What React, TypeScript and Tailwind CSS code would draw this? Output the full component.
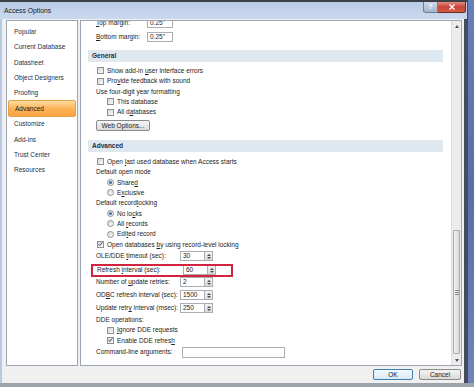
import type { ReactNode } from "react";

const navItems = [
  "Popular",
  "Current Database",
  "Datasheet",
  "Object Designers",
  "Proofing",
  "Advanced",
  "Customize",
  "Add-ins",
  "Trust Center",
  "Resources",
];

function U({ children }: { children: ReactNode }) {
  return <span className="underline">{children}</span>;
}

function CheckBox({ checked = false }: { checked?: boolean }) {
  return (
    <span className="w-[7px] h-[7px] shrink-0 border border-[#8e8f8f] bg-gradient-to-br from-[#d6d6d6] to-[#fbfbfb] flex items-center justify-center">
      {checked && (
        <svg width="6" height="6" viewBox="0 0 6 6">
          <path d="M0.8 3.2 L2.3 4.8 L5.2 0.9" fill="none" stroke="#33476e" strokeWidth="1.1" />
        </svg>
      )}
    </span>
  );
}

function Radio({ on = false }: { on?: boolean }) {
  return (
    <span className="w-[7px] h-[7px] shrink-0 rounded-full border border-[#8e8f8f] bg-gradient-to-br from-[#d8d8d8] to-[#fafafa] flex items-center justify-center">
      {on && <span className="w-[3px] h-[3px] rounded-full bg-[#3f6aa6]" />}
    </span>
  );
}

function CheckRow({ label, checked, nested }: { label: ReactNode; checked?: boolean; nested?: boolean }) {
  return (
    <div className={`h-[10.34px] flex items-center gap-[3px] ${nested ? "pl-[26px]" : "pl-[16px]"}`}>
      <CheckBox checked={checked} />
      <span className="whitespace-nowrap">{label}</span>
    </div>
  );
}

function RadioRow({ label, on }: { label: ReactNode; on?: boolean }) {
  return (
    <div className="h-[10.34px] flex items-center gap-[3px] pl-[26px]">
      <Radio on={on} />
      <span className="whitespace-nowrap">{label}</span>
    </div>
  );
}

function TextRow({ label }: { label: ReactNode }) {
  return <div className="h-[10.34px] flex items-center pl-[15px] whitespace-nowrap">{label}</div>;
}

function Spin() {
  return (
    <div className="w-[8px] h-[10px] border border-l-0 border-[#abadb3] bg-gradient-to-b from-[#f2f2f2] to-[#dcdcdc] flex flex-col items-center justify-center gap-[1px]">
      <svg width="4" height="2" viewBox="0 0 4 2">
        <path d="M0 2 L2 0 L4 2 Z" fill="#4d4d4d" />
      </svg>
      <svg width="4" height="2" viewBox="0 0 4 2">
        <path d="M0 0 L4 0 L2 2 Z" fill="#4d4d4d" />
      </svg>
    </div>
  );
}

function SpinRow({ label, value, shifted }: { label: ReactNode; value: string; shifted?: boolean }) {
  return (
    <div className={`relative h-[13px] flex items-center ${shifted ? "pl-[16px] pt-[2px]" : "pl-[15px]"}`}>
      <span className={`${shifted ? "w-[86px]" : "w-[84px]"} whitespace-nowrap`}>{label}</span>
      <div className="w-[25px] h-[10px] border border-[#abadb3] bg-white flex items-center pl-[2px]">{value}</div>
      <Spin />
      {shifted && (
        <div className="absolute left-[10px] top-[1.5px] w-[142px] h-[13px] border-2 border-[#d22440]" />
      )}
    </div>
  );
}

function SectionHeader({ title, className }: { title: string; className: string }) {
  return (
    <div className={`ml-[7px] mr-[8px] h-[12px] bg-[#dfe7ef] flex items-center pl-[4px] font-bold text-[#1e2e48] ${className}`}>
      {title}
    </div>
  );
}

function Scrollbar() {
  return (
    <div className="w-[10px] flex flex-col bg-[#ececec] border-l border-[#dedede]">
      <div className="h-[10px] flex items-center justify-center">
        <svg width="4" height="3" viewBox="0 0 4 3">
          <path d="M0 3 L2 0 L4 3 Z" fill="#555" />
        </svg>
      </div>
      <div className="h-[199px]" />
      <div className="h-[124px] mx-[1px] rounded-[1px] border border-[#a9a9a9] bg-gradient-to-r from-[#f3f3f3] to-[#d9d9d9] flex flex-col items-center justify-center gap-[1px]">
        <span className="w-[4px] h-[1px] bg-[#8a8a8a]" />
        <span className="w-[4px] h-[1px] bg-[#8a8a8a]" />
        <span className="w-[4px] h-[1px] bg-[#8a8a8a]" />
      </div>
      <div className="h-[1px]" />
      <div className="h-[10px] flex items-center justify-center">
        <svg width="4" height="3" viewBox="0 0 4 3">
          <path d="M0 0 L4 0 L2 3 Z" fill="#555" />
        </svg>
      </div>
    </div>
  );
}

export default function App() {
  return (
    <div className="w-[474px] h-[387px] flex flex-col overflow-hidden bg-[#5f74ad] font-['Liberation_Sans',Arial,sans-serif] text-[6.5px] text-[#222]">
      <div className="flex h-[383px]">
        <div className="w-[467px] flex flex-col">
          <div className="h-[2px] bg-[#3d4046]" />
          {/* title bar */}
          <div className="h-[17px] flex items-start bg-gradient-to-b from-[#b9cce7] to-[#cbd9ee]">
            <span className="pl-[4px] pt-[4px] text-[6.8px] text-[#1a1a1a]">Access Options</span>
            <div className="ml-auto mr-[1px] flex">
              <div className="w-[15px] h-[11px] rounded-bl-[3px] border border-t-0 border-[#6f7d92] bg-gradient-to-b from-[#cfdaea] to-[#a5b5cc] flex items-center justify-center text-[7px] text-white font-bold">
                ?
              </div>
              <div className="w-[28px] h-[11px] rounded-br-[3px] border border-t-0 border-l-0 border-[#6b2a24] bg-gradient-to-b from-[#e48a7c] via-[#c9423a] to-[#d2603f] flex items-center justify-center">
                <svg width="6" height="6" viewBox="0 0 6 6">
                  <path d="M0.5 0.5 L5.5 5.5 M5.5 0.5 L0.5 5.5" stroke="#fff" strokeWidth="1.4" />
                </svg>
              </div>
            </div>
          </div>
          <div className="flex flex-1 min-h-0">
            <div className="w-[2px] bg-[#b6c9e5]" />
            {/* client area */}
            <div className="w-[462px] flex flex-col bg-[#f0f0f0] pt-[1px] pl-[4px] pr-[2px]">
              <div className="h-[346px] flex gap-[2px]">
                {/* nav */}
                <div className="w-[72px] border border-[#9ba5b3] bg-white pt-[3px] flex flex-col text-[#1c2f4a]">
                  {navItems.map((item) =>
                    item === "Advanced" ? (
                      <div
                        key={item}
                        className="h-[17.4px] -my-[1px] mx-[1px] flex items-center pl-[6px] rounded-[2px] border border-[#e3a14e] bg-gradient-to-b from-[#fedc9f] via-[#fcb458] to-[#f9a33f] text-[#1a1a1a]"
                      >
                        {item}
                      </div>
                    ) : (
                      <div key={item} className="h-[15.4px] flex items-center pl-[7px] whitespace-nowrap">
                        {item}
                      </div>
                    ),
                  )}
                </div>
                {/* options panel */}
                <div className="w-[382px] border border-[#9ba5b3] bg-white flex">
                  <div className="w-[370px] overflow-hidden flex flex-col">
                    <div className="-mt-[4.4px] h-[13.4px] flex items-center pl-[15px]">
                      <span className="w-[51px]">
                        <U>T</U>op margin:
                      </span>
                      <div className="w-[26px] h-[10px] border border-[#abadb3] flex items-center pl-[2px]">0.25"</div>
                    </div>
                    <div className="h-[13.4px] flex items-center pl-[15px]">
                      <span className="w-[51px]">
                        <U>B</U>ottom margin:
                      </span>
                      <div className="w-[26px] h-[10px] border border-[#abadb3] flex items-center pl-[2px]">0.25"</div>
                    </div>

                    <SectionHeader title="General" className="mt-[6.6px]" />
                    <div className="mt-[3.8px]" />
                    <CheckRow label={<>Show add-in <U>u</U>ser interface errors</>} />
                    <CheckRow label={<>Pro<U>v</U>ide feedback with sound</>} />
                    <TextRow label="Use four-digit year formatting" />
                    <CheckRow nested label={<>This database</>} />
                    <CheckRow nested label={<>All d<U>a</U>tabases</>} />
                    <div className="mt-[3px] ml-[15px] w-[54px] h-[11px] rounded-[2px] border border-[#8a8a8a] bg-gradient-to-b from-[#f6f6f6] to-[#dadada] flex items-center justify-center">
                      Web Options...
                    </div>

                    <SectionHeader title="Advanced" className="mt-[8.2px]" />
                    <div className="mt-[5px]" />
                    <CheckRow label={<>Open <U>l</U>ast used database when Access starts</>} />
                    <TextRow label="Default open mode" />
                    <RadioRow on label={<>Share<U>d</U></>} />
                    <RadioRow label={<>E<U>x</U>clusive</>} />
                    <TextRow label={<>Default record <U>l</U>ocking</>} />
                    <RadioRow on label={<>No lo<U>c</U>ks</>} />
                    <RadioRow label={<>All <U>r</U>ecords</>} />
                    <RadioRow label={<>Edi<U>t</U>ed record</>} />
                    <CheckRow checked label={<>Open databases <U>b</U>y using record-level locking</>} />
                    <SpinRow label={<>OLE/DDE <U>t</U>imeout (sec):</>} value="30" />
                    <SpinRow shifted label={<>Refresh <U>i</U>nterval (sec):</>} value="60" />
                    <SpinRow label={<>Number of <U>u</U>pdate retries:</>} value="2" />
                    <SpinRow label={<>OD<U>B</U>C refresh interval (sec):</>} value="1500" />
                    <SpinRow label={<>Update retr<U>y</U> interval (msec):</>} value="250" />
                    <TextRow label="DDE operations:" />
                    <CheckRow nested label={<><U>I</U>gnore DDE requests</>} />
                    <CheckRow nested checked label={<>Enable DDE refres<U>h</U></>} />
                    <div className="h-[13px] flex items-center pl-[15px]">
                      <span className="w-[86px] whitespace-nowrap">Command-line arguments:</span>
                      <div className="w-[103px] h-[11px] border border-[#abadb3] bg-white" />
                    </div>
                  </div>
                  <Scrollbar />
                </div>
              </div>
              {/* buttons */}
              <div className="flex-1 flex items-start justify-end pt-[3px] pr-[1px] gap-[6px]">
                <div className="w-[40px] h-[11px] rounded-[2px] border border-[#3c7fb1] bg-gradient-to-b from-[#f4fafd] to-[#d6e9f6] flex items-center justify-center">
                  OK
                </div>
                <div className="w-[42px] h-[11px] rounded-[2px] border border-[#8a8a8a] bg-gradient-to-b from-[#f4f4f4] to-[#dadada] flex items-center justify-center">
                  Cancel
                </div>
              </div>
            </div>
            <div className="w-[3px] bg-[#454d5c]" />
          </div>
        </div>
        <div className="flex-1 bg-gradient-to-b from-[#6a7fb8] via-[#5a6fa9] to-[#7084bb] border-l border-[#3e4a6e]" />
      </div>
      <div className="h-[4px] bg-[#9ca3ad]" />
    </div>
  );
}
